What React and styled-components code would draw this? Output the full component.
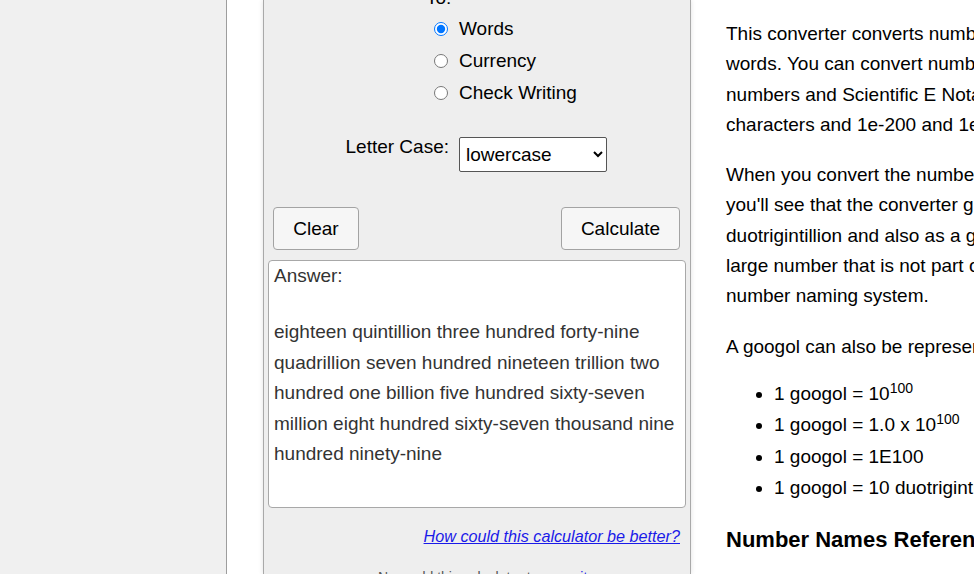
import React, { useState } from 'react';
import styled, { createGlobalStyle } from 'styled-components';

const GlobalStyle = createGlobalStyle`
    html, body {
        margin: 0;
        padding: 0;
        overflow: hidden;
        background: #fff;
    }
    body {
        font-family: "Liberation Sans", Arial, sans-serif;
        color: #000;
    }
`;

const Page = styled.div`
    display: flex;
    width: 1400px;
    height: 574px;
    overflow: hidden;
`;

const SideBar = styled.div`
    width: 226px;
    flex-shrink: 0;
    background: #f0f0f0;
    border-right: 1px solid #9d9d9d;
`;

const Gutter = styled.div`
    width: 36px;
    flex-shrink: 0;
    background: #fff;
`;

const Panel = styled.div`
    width: 426px;
    flex-shrink: 0;
    background: #eeeeee;
    border-left: 1px solid #a9a9a9;
    border-right: 1px solid #a9a9a9;
    box-shadow: 0 0 5px rgba(0, 0, 0, 0.12);
    font-size: 19px;
    position: relative;
    z-index: 1;
`;

const ToLabel = styled.div`
    margin-top: -17px;
    padding-left: 162px;
    height: 30px;
    line-height: 30px;
`;

const RadioRow = styled.label`
    display: flex;
    align-items: center;
    height: 32px;
    padding-left: 170px;
    gap: 11px;
    input {
        margin: 0;
        width: 14px;
        height: 14px;
    }
`;

const CaseRow = styled.div`
    display: flex;
    align-items: flex-start;
    margin-top: 28px;
    gap: 10px;
`;

const CaseLabel = styled.span`
    width: 185px;
    text-align: right;
    line-height: 20px;
`;

const Select = styled.select`
    width: 148px;
    height: 35px;
    font-size: 19px;
    font-family: "Liberation Sans", Arial, sans-serif;
    padding: 0 2px;
    border: 1px solid #555;
    border-radius: 2px;
    background: #fff;
    color: #000;
`;

const ButtonRow = styled.div`
    display: flex;
    justify-content: space-between;
    padding: 0 10px 0 9px;
    margin-top: 35px;
`;

const Button = styled.button`
    width: ${(p) => p.$w}px;
    height: 43px;
    font-size: 19px;
    font-family: "Liberation Sans", Arial, sans-serif;
    background: #f6f6f6;
    border: 1px solid #a3a3a3;
    border-radius: 4px;
    color: #000;
    padding: 0;
`;

const AnswerBox = styled.div`
    margin: 10px 4px 0 4px;
    height: 246px;
    background: #fff;
    border: 1px solid #a8a8a8;
    border-radius: 4px;
    padding: 0 5px;
    color: #333;
    font-size: 19px;
`;

const AnswerTitle = styled.div`
    line-height: 30px;
    margin-bottom: 26px;
`;

const AnswerText = styled.div`
    line-height: 30.5px;
`;

const LinkRow = styled.div`
    text-align: right;
    padding-right: 10px;
    margin-top: 19px;
    font-size: 16.2px;
    a {
        color: #1a1ae8;
        font-style: italic;
        text-decoration: underline;
    }
`;

const WidgetNote = styled.div`
    margin-top: 23px;
    padding-left: 114px;
    font-size: 14px;
    color: #555;
    a {
        color: #1a1ae8;
    }
`;

const Content = styled.div`
    width: 640px;
    flex-shrink: 0;
    padding: 19px 0 0 35px;
    font-size: 19px;
    line-height: 30.3px;
    white-space: nowrap;
    p {
        margin: 0 0 20px 0;
    }
    ul {
        margin: 16px 0 0 0;
        padding-left: 48px;
    }
    li {
        line-height: 31.5px;
    }
    sup {
        font-size: 14px;
        line-height: 0;
        vertical-align: 7px;
    }
`;

const Heading = styled.h3`
    font-size: 22px;
    font-weight: bold;
    margin: 21px 0 0 0;
`;

const answer =
    'eighteen quintillion three hundred forty-nine quadrillion seven hundred nineteen trillion two hundred one billion five hundred sixty-seven million eight hundred sixty-seven thousand nine hundred ninety-nine';

function App() {
    const [mode, setMode] = useState('words');
    const [letterCase, setLetterCase] = useState('lowercase');

    return (
        <>
            <GlobalStyle />
            <Page>
                <SideBar />
                <Gutter />
                <Panel>
                    <ToLabel>To:</ToLabel>
                    {[
                        ['words', 'Words'],
                        ['currency', 'Currency'],
                        ['check', 'Check Writing'],
                    ].map(([value, label]) => (
                        <RadioRow key={value}>
                            <input
                                type="radio"
                                name="to"
                                checked={mode === value}
                                onChange={() => setMode(value)}
                            />
                            {label}
                        </RadioRow>
                    ))}
                    <CaseRow>
                        <CaseLabel>Letter Case:</CaseLabel>
                        <Select
                            value={letterCase}
                            onChange={(e) => setLetterCase(e.target.value)}
                        >
                            <option value="lowercase">lowercase</option>
                            <option value="uppercase">UPPERCASE</option>
                            <option value="title">Title Case</option>
                            <option value="sentence">Sentence case</option>
                        </Select>
                    </CaseRow>
                    <ButtonRow>
                        <Button $w={86}>Clear</Button>
                        <Button $w={119}>Calculate</Button>
                    </ButtonRow>
                    <AnswerBox>
                        <AnswerTitle>Answer:</AnswerTitle>
                        <AnswerText>{answer}</AnswerText>
                    </AnswerBox>
                    <LinkRow>
                        <a href="#feedback">How could this calculator be better?</a>
                    </LinkRow>
                    <WidgetNote>
                        Now add this calculator to <a href="#site">your site</a>
                    </WidgetNote>
                </Panel>
                <Content>
                    <p>
                        This converter converts numbers into letters and words or into
                        <br />
                        words. You can convert numbers as large as a googol, decimal
                        <br />
                        numbers and Scientific E Notation numbers with up to 200
                        <br />
                        characters and 1e-200 and 1e+200 in value.
                    </p>
                    <p>
                        When you convert the number googol into words
                        <br />
                        you'll see that the converter gives the answer as ten
                        <br />
                        duotrigintillion and also as a googol, since googol is a
                        <br />
                        large number that is not part of the standard
                        <br />
                        number naming system.
                    </p>
                    <p style={{ marginBottom: 0 }}>
                        A googol can also be represented as:
                    </p>
                    <ul>
                        <li>
                            1 googol = 10<sup>100</sup>
                        </li>
                        <li>
                            1 googol = 1.0 x 10<sup>100</sup>
                        </li>
                        <li>1 googol = 1E100</li>
                        <li>1 googol = 10 duotrigintillion</li>
                    </ul>
                    <Heading>Number Names Reference</Heading>
                </Content>
            </Page>
        </>
    );
}

export default App;
